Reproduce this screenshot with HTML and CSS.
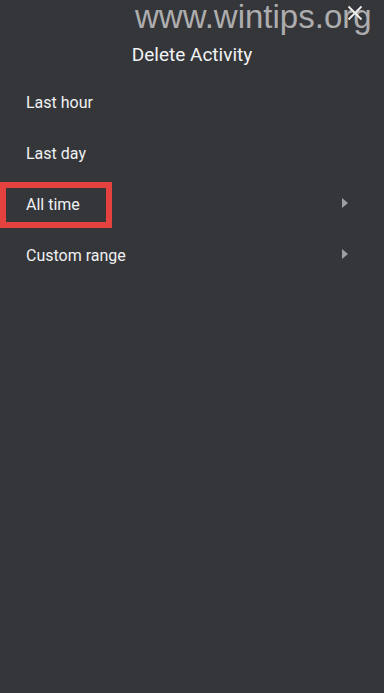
FILE: index.html
```html
<!DOCTYPE html>
<html lang="en">
<head>
  <meta charset="UTF-8">
  <meta name="viewport" content="width=device-width, initial-scale=1.0">
  <title>Delete Activity</title>
  <link rel="stylesheet" href="styles.css">
</head>
<body>
  <div class="dialog">
    <div class="watermark">www.wintips.org</div>
    <button class="close-btn" aria-label="Close">
      <svg width="16" height="16" viewBox="0 0 16 16">
        <path d="M1.5 1.5 L14.5 14.5 M14.5 1.5 L1.5 14.5" stroke="#f1f1f1" stroke-width="1.8" fill="none"/>
      </svg>
    </button>

    <div class="header">
      <h1 class="title">Delete Activity</h1>
    </div>

    <ul class="options">
      <li class="option">Last hour</li>
      <li class="option">Last day</li>
      <li class="option has-sub highlighted">All time <span class="arrow"></span></li>
      <li class="option has-sub">Custom range <span class="arrow"></span></li>
    </ul>
  </div>
</body>
</html>
```

FILE: styles.css
```css
* {
  margin: 0;
  padding: 0;
  box-sizing: border-box;
}

body {
  font-family: Roboto, "Liberation Sans", sans-serif;
  background-color: #35363a;
  color: #e8eaed;
  height: 100vh;
  overflow: hidden;
}

.dialog {
  position: relative;
  width: 100%;
  height: 100%;
}

/* Site watermark laid over the top of the screen */
.watermark {
  position: absolute;
  top: 0;
  left: 135px;
  font-family: "Liberation Sans", Arial, sans-serif;
  font-size: 33px;
  line-height: 33px;
  color: #b8b8b8;
  opacity: 0.92;
  white-space: nowrap;
  pointer-events: none;
  z-index: 1;
}

.close-btn {
  position: absolute;
  top: 5px;
  left: 347px;
  width: 16px;
  height: 16px;
  background: none;
  border: none;
  z-index: 2;
}

.close-btn svg {
  display: block;
}

.header {
  padding: 43px 0 10px;
  text-align: center;
}

.title {
  font-size: 19px;
  font-weight: 400;
  line-height: 24px;
  color: #f1f3f4;
}

.options {
  list-style: none;
}

.option {
  position: relative;
  height: 51px;
  display: flex;
  align-items: center;
  justify-content: space-between;
  padding: 0 36px 0 26px;
  font-size: 16px;
  color: #f0f1f3;
}

/* Small grey triangle for options with a submenu */
.arrow {
  width: 0;
  height: 0;
  border-top: 5px solid transparent;
  border-bottom: 5px solid transparent;
  border-left: 6px solid #9c9fa4;
  margin-bottom: 4px;
}

/* Red annotation box around "All time" */
.highlighted::before {
  content: "";
  position: absolute;
  left: 0;
  top: 3px;
  width: 112px;
  height: 46px;
  border: 6px solid #e5413f;
  box-sizing: border-box;
}
```
